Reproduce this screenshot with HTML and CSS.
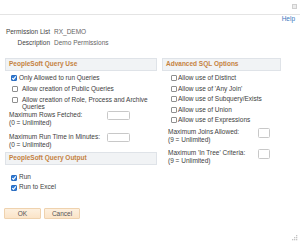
FILE: index.html
```html
<!DOCTYPE html>
<html>
<head>
<meta charset="utf-8">
<title>Permission List</title>
<link rel="stylesheet" href="styles.css">
</head>
<body>
<div class="page">
  <div class="topbar"><span class="tb-icon"></span></div>
  <div class="helprow"><a class="help">Help</a></div>
  <div class="fields">
    <span class="lbl">Permission List</span><span class="val">RX_DEMO</span>
    <span class="lbl">Description</span><span class="val">Demo Permissions</span>
  </div>
  <div class="columns">
    <div class="col left">
      <div class="gb-head">PeopleSoft Query Use</div>
      <div class="cb-row on-row first"><span class="cb on"><svg viewBox="0 0 6 6"><path d="M1.2 3.1 L2.5 4.4 L4.9 1.4" fill="none" stroke="#fff" stroke-width="1.1"/></svg></span><span>Only Allowed to run Queries</span></div>
      <div class="cb-row off-row"><span class="cb"></span><span>Allow creation of Public Queries</span></div>
      <div class="cb-row off-row wrap"><span class="cb"></span><span class="wrap-text">Allow creation of Role, Process and Archive Queries</span></div>
      <div class="num-row rows-fetched"><div class="num-text lw"><div class="num-lbl">Maximum Rows Fetched:</div><div class="note">(0 = Unlimited)</div></div><span class="inp wide"></span></div>
      <div class="num-row run-time"><div class="num-text lw"><div class="num-lbl">Maximum Run Time in Minutes:</div><div class="note">(0 = Unlimited)</div></div><span class="inp wide"></span></div>
      <div class="gb-head output">PeopleSoft Query Output</div>
      <div class="cb-row on-row run"><span class="cb on"><svg viewBox="0 0 6 6"><path d="M1.2 3.1 L2.5 4.4 L4.9 1.4" fill="none" stroke="#fff" stroke-width="1.1"/></svg></span><span>Run</span></div>
      <div class="cb-row on-row"><span class="cb on"><svg viewBox="0 0 6 6"><path d="M1.2 3.1 L2.5 4.4 L4.9 1.4" fill="none" stroke="#fff" stroke-width="1.1"/></svg></span><span>Run to Excel</span></div>
    </div>
    <div class="col right">
      <div class="gb-head">Advanced SQL Options</div>
      <div class="sql-list">
        <div class="cb-row sql"><span class="cb"></span><span>Allow use of Distinct</span></div>
        <div class="cb-row sql"><span class="cb"></span><span>Allow use of 'Any Join'</span></div>
        <div class="cb-row sql"><span class="cb"></span><span>Allow use of Subquery/Exists</span></div>
        <div class="cb-row sql"><span class="cb"></span><span>Allow use of Union</span></div>
        <div class="cb-row sql"><span class="cb"></span><span>Allow use of Expressions</span></div>
      </div>
      <div class="num-row joins"><div class="num-text rw"><div class="num-lbl">Maximum Joins Allowed:</div><div class="note">(9 = Unlimited)</div></div><span class="inp narrow"></span></div>
      <div class="num-row intree"><div class="num-text rw"><div class="num-lbl">Maximum 'In Tree' Criteria:</div><div class="note">(9 = Unlimited)</div></div><span class="inp narrow"></span></div>
    </div>
  </div>
  <div class="buttons">
    <button class="btn ok">OK</button>
    <button class="btn cancel">Cancel</button>
  </div>
  <svg class="grip" viewBox="0 0 8 8"><rect x="6" y="2" width="1.3" height="1.3" fill="#c4c4c4"/><rect x="4" y="4" width="1.3" height="1.3" fill="#c4c4c4"/><rect x="6" y="4" width="1.3" height="1.3" fill="#c4c4c4"/><rect x="2" y="6" width="1.3" height="1.3" fill="#c4c4c4"/><rect x="4" y="6" width="1.3" height="1.3" fill="#c4c4c4"/><rect x="6" y="6" width="1.3" height="1.3" fill="#c4c4c4"/></svg>
</div>
</body>
</html>
```
FILE: styles.css
```css
* { box-sizing: border-box; }
html, body { margin: 0; padding: 0; background: #fff; }
.page {
  position: relative;
  width: 300px;
  height: 242px;
  overflow: hidden;
  font-family: "Liberation Sans", Arial, sans-serif;
  font-size: 6.5px;
  line-height: 1;
  color: #3d3d3d;
}
.topbar {
  height: 15px;
  border-bottom: 1px solid #e4e4e4;
  display: flex;
  justify-content: flex-end;
  align-items: flex-start;
  padding: 4px 3px 0 0;
}
.tb-icon {
  width: 5px;
  height: 5px;
  border: 1px solid #cfcfcf;
  background: #ececec;
}
.helprow {
  height: 9px;
  display: flex;
  justify-content: flex-end;
  align-items: center;
  padding-right: 5px;
}
.help { color: #3a76bd; }
.fields {
  display: grid;
  grid-template-columns: 50px auto;
  column-gap: 4px;
  row-gap: 5px;
  margin-top: 5px;
  line-height: 6px;
}
.lbl { text-align: right; color: #444; }
.val { color: #666; }
.columns {
  display: flex;
  align-items: flex-start;
  gap: 5px;
  padding-left: 5px;
  margin-top: 12px;
}
.left { width: 152px; }
.right { width: 119px; }
.gb-head {
  height: 13px;
  border: 1px solid #dfe3e8;
  background: #f1f3f5;
  color: #c5823f;
  font-weight: bold;
  padding-left: 3px;
  display: flex;
  align-items: center;
}
.gb-head.output { margin-top: 3px; }
.cb-row {
  display: flex;
  align-items: center;
  height: 10px;
}
.cb {
  flex: none;
  width: 6px;
  height: 6px;
  border: 1px solid #8f8f8f;
  border-radius: 1px;
  background: #fff;
}
.cb.on {
  border-color: #2a6cc0;
  background: #2f7bd6;
  display: flex;
}
.cb.on svg { width: 100%; height: 100%; display: block; margin: -1px; width: 6px; height: 6px; }
.on-row { padding-left: 6px; gap: 2px; }
.off-row { padding-left: 7px; gap: 4px; margin-top: 1px; }
.first { margin-top: 2px; }
.wrap { height: auto; align-items: flex-start; margin-top: 2px; }
.wrap .cb { margin-top: 0.5px; }
.wrap-text { line-height: 7px; width: 128px; margin-top: -0.5px; }
.num-row {
  display: flex;
  align-items: flex-start;
  padding-left: 4px;
}
.num-text .num-lbl, .num-text .note { line-height: 8px; }
.lw { width: 98px; }
.rw { width: 90px; }
.rows-fetched { margin-top: 1px; }
.run-time { margin-top: 6px; }
.inp {
  display: block;
  height: 9px;
  border: 1px solid #c8c8c8;
  border-radius: 1.5px;
  background: #fff;
}
.inp.wide { width: 23px; }
.inp.narrow { width: 12px; height: 10px; }
.run { margin-top: 8px; }
.sql-list { display: flex; flex-direction: column; margin-top: 2px; }
.cb-row.sql { height: 10.5px; padding-left: 9px; gap: 1px; }
.right .num-row { padding-left: 6px; }
.joins { margin-top: 2.5px; }
.intree { margin-top: 5px; }
.buttons {
  display: flex;
  gap: 3px;
  padding-left: 4px;
  margin-top: 15px;
}
.btn {
  font-family: "Liberation Sans", Arial, sans-serif;
  font-size: 6.5px;
  color: #555;
  height: 11px;
  padding: 0;
  border: 1px solid #efd2ae;
  border-radius: 1px;
  background: linear-gradient(#fdf0df, #fbe4c8);
}
.btn.ok { width: 37px; }
.btn.cancel { width: 36px; }
.grip {
  position: absolute;
  right: 2px;
  bottom: 1px;
  width: 8px;
  height: 8px;
}
```
